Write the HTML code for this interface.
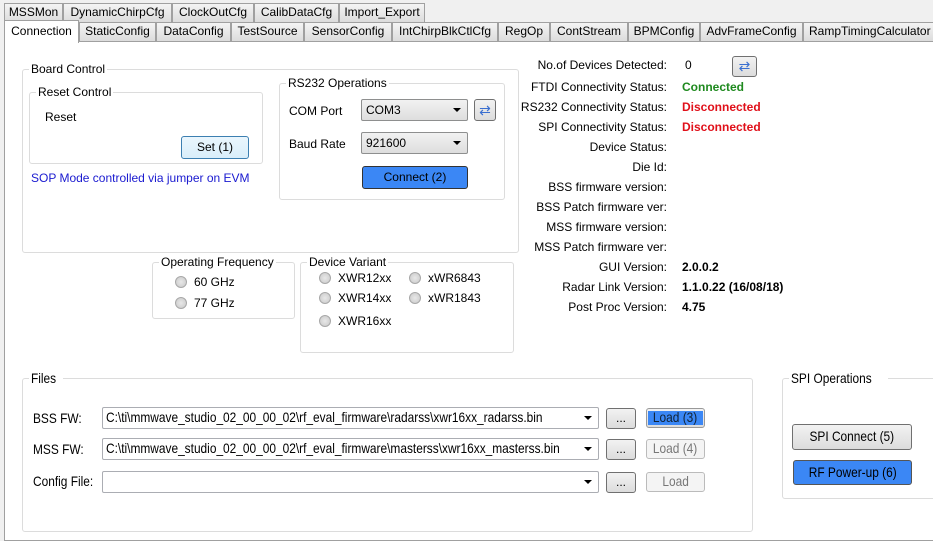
<!DOCTYPE html>
<html><head><meta charset="utf-8"><style>
*{box-sizing:border-box;margin:0;padding:0}
body{width:933px;height:536px;background:#f0f0f0;font-family:"Liberation Sans",sans-serif;font-size:12px;color:#000;position:relative;overflow:hidden}
.a{position:absolute;white-space:nowrap}
.tab{position:absolute;height:19px;border:1px solid #a0a0a0;border-bottom:none;background:linear-gradient(#f4f4f4,#dcdcdc);text-align:center;line-height:17px;font-size:12px;overflow:hidden}
.content{position:absolute;left:4px;top:41px;width:940px;height:500px;background:#fff;border:1px solid #a0a0a0}
.grp{position:absolute;border:1px solid #dcdcdc;border-radius:3px}
.grp>.t{position:absolute;top:-8px;left:6px;background:#fff;padding:0 2px;line-height:14px}
.btn{position:absolute;border:1px solid #707070;border-radius:3px;background:linear-gradient(#f2f2f2,#dcdcdc);text-align:center}
.blue{background:#3b87f5;border-color:#3c7fb1}
.combo{position:absolute;border:1px solid #abadb3;background:#fff;border-radius:2px;overflow:hidden}
.combo.g{background:linear-gradient(#f2f2f2,#dedede);border-color:#8e8f8f}
.arr{position:absolute;right:6px;top:50%;margin-top:-2px;width:0;height:0;border-left:4px solid transparent;border-right:4px solid transparent;border-top:4px solid #000}
.lbl{position:absolute;right:266px;text-align:right;white-space:nowrap}
.val{position:absolute;left:682px;font-weight:bold;white-space:nowrap}
.radio{position:absolute;width:12px;height:12px;border-radius:50%;border:1px solid #a8a8a8;background:radial-gradient(#e8e8e8,#c8c8c8)}
.n{font-size:14px;transform:scaleX(.85);transform-origin:left center;display:inline-block}
.c .n{transform-origin:center}
</style></head><body>
<div class="tab" style="left:4px;top:3px;width:59px">MSSMon</div>
<div class="tab" style="left:63px;top:3px;width:109px">DynamicChirpCfg</div>
<div class="tab" style="left:172px;top:3px;width:82px">ClockOutCfg</div>
<div class="tab" style="left:254px;top:3px;width:85px">CalibDataCfg</div>
<div class="tab" style="left:339px;top:3px;width:86px">Import_Export</div>
<div class="content"></div>
<div class="tab" style="left:79px;top:22px;width:77px">StaticConfig</div>
<div class="tab" style="left:156px;top:22px;width:75px">DataConfig</div>
<div class="tab" style="left:231px;top:22px;width:73px">TestSource</div>
<div class="tab" style="left:304px;top:22px;width:88px">SensorConfig</div>
<div class="tab" style="left:392px;top:22px;width:106px">IntChirpBlkCtlCfg</div>
<div class="tab" style="left:498px;top:22px;width:52px">RegOp</div>
<div class="tab" style="left:550px;top:22px;width:78px">ContStream</div>
<div class="tab" style="left:628px;top:22px;width:72px">BPMConfig</div>
<div class="tab" style="left:700px;top:22px;width:103px">AdvFrameConfig</div>
<div class="tab" style="left:803px;top:22px;width:140px;text-align:left;padding-left:5px">RampTimingCalculator</div>
<div class="tab" style="left:4px;top:20px;width:75px;height:23px;background:#fff;line-height:20px">Connection</div>

<div class="grp" style="left:22px;top:69px;width:497px;height:184px"><span class="t">Board Control</span></div>
<div class="grp" style="left:29px;top:92px;width:234px;height:72px"><span class="t">Reset Control</span></div>
<div class="a" style="left:45px;top:110px">Reset</div>
<div class="btn" style="left:181px;top:136px;width:68px;height:23px;line-height:21px;border-color:#3c7fb1;background:linear-gradient(#eaf6fd,#d9eefa)">Set (1)</div>
<div class="a" style="left:31px;top:171px;color:#1a1ad0">SOP Mode controlled via jumper on EVM</div>
<div class="grp" style="left:279px;top:83px;width:226px;height:117px"><span class="t">RS232 Operations</span></div>
<div class="a" style="left:289px;top:104px">COM Port</div>
<div class="combo g" style="left:361px;top:99px;width:107px;height:22px;padding:3px 4px">COM3<span class="arr"></span></div>
<div class="btn" style="left:474px;top:99px;width:22px;height:22px;color:#3a6fd0;line-height:20px;font-size:14px">⇄</div>
<div class="a" style="left:289px;top:137px">Baud Rate</div>
<div class="combo g" style="left:361px;top:132px;width:107px;height:22px;padding:3px 4px">921600<span class="arr"></span></div>
<div class="btn blue" style="left:362px;top:166px;width:106px;height:23px;line-height:21px;border-color:#333">Connect (2)</div>

<div class="lbl" style="top:58px">No.of Devices Detected:</div><div class="a" style="left:685px;top:58px">0</div>
<div class="btn" style="left:732px;top:56px;width:25px;height:21px;color:#3a6fd0;line-height:19px;font-size:14px">⇄</div>
<div class="lbl" style="top:80px">FTDI Connectivity Status:</div><div class="val" style="top:80px;color:#1f8a1f">Connected</div>
<div class="lbl" style="top:100px">RS232 Connectivity Status:</div><div class="val" style="top:100px;color:#e0101a">Disconnected</div>
<div class="lbl" style="top:120px">SPI Connectivity Status:</div><div class="val" style="top:120px;color:#e0101a">Disconnected</div>
<div class="lbl" style="top:140px">Device Status:</div>
<div class="lbl" style="top:160px">Die Id:</div>
<div class="lbl" style="top:180px">BSS firmware version:</div>
<div class="lbl" style="top:200px">BSS Patch firmware ver:</div>
<div class="lbl" style="top:220px">MSS firmware version:</div>
<div class="lbl" style="top:240px">MSS Patch firmware ver:</div>
<div class="lbl" style="top:260px">GUI Version:</div><div class="val" style="top:260px">2.0.0.2</div>
<div class="lbl" style="top:280px">Radar Link Version:</div><div class="val" style="top:280px">1.1.0.22 (16/08/18)</div>
<div class="lbl" style="top:300px">Post Proc Version:</div><div class="val" style="top:300px">4.75</div>

<div class="grp" style="left:152px;top:262px;width:143px;height:57px"><span class="t">Operating Frequency</span></div>
<div class="radio" style="left:175px;top:276px"></div><div class="a" style="left:194px;top:275px">60 GHz</div>
<div class="radio" style="left:175px;top:297px"></div><div class="a" style="left:194px;top:296px">77 GHz</div>
<div class="grp" style="left:300px;top:262px;width:214px;height:91px"><span class="t">Device Variant</span></div>
<div class="radio" style="left:319px;top:272px"></div><div class="a" style="left:338px;top:271px">XWR12xx</div>
<div class="radio" style="left:409px;top:272px"></div><div class="a" style="left:428px;top:271px">xWR6843</div>
<div class="radio" style="left:319px;top:292px"></div><div class="a" style="left:338px;top:291px">XWR14xx</div>
<div class="radio" style="left:409px;top:292px"></div><div class="a" style="left:428px;top:291px">xWR1843</div>
<div class="radio" style="left:319px;top:315px"></div><div class="a" style="left:338px;top:314px">XWR16xx</div>

<div class="grp" style="left:22px;top:378px;width:731px;height:154px"><span class="t"><span class="n">Files</span></span></div>
<div class="a" style="left:33px;top:410px"><span class="n">BSS FW:</span></div>
<div class="combo" style="left:102px;top:407px;width:497px;height:22px;padding:1px 3px"><span class="n">C:\ti\mmwave_studio_02_00_00_02\rf_eval_firmware\radarss\xwr16xx_radarss.bin</span><span class="arr"></span></div>
<div class="btn" style="left:606px;top:408px;width:30px;height:21px;line-height:18px">...</div>
<div class="btn c" style="left:646px;top:408px;width:59px;height:20px;border-color:#999;line-height:17px"><span style="background:#3b87f5;color:#123;padding:0 1px"><span class="n">Load (3)</span></span></div>
<div class="a" style="left:33px;top:441px"><span class="n">MSS FW:</span></div>
<div class="combo" style="left:102px;top:438px;width:497px;height:22px;padding:1px 3px"><span class="n">C:\ti\mmwave_studio_02_00_00_02\rf_eval_firmware\masterss\xwr16xx_masterss.bin</span><span class="arr"></span></div>
<div class="btn" style="left:606px;top:439px;width:30px;height:21px;line-height:18px">...</div>
<div class="btn c" style="left:646px;top:439px;width:59px;height:20px;border-color:#bbb;color:#777;background:#f4f4f4;line-height:17px"><span class="n">Load (4)</span></div>
<div class="a" style="left:33px;top:473px"><span class="n">Config File:</span></div>
<div class="combo" style="left:102px;top:471px;width:497px;height:22px"><span class="arr"></span></div>
<div class="btn" style="left:606px;top:472px;width:30px;height:21px;line-height:18px">...</div>
<div class="btn c" style="left:646px;top:472px;width:59px;height:20px;border-color:#bbb;color:#777;background:#f4f4f4;line-height:17px"><span class="n">Load</span></div>

<div class="grp" style="left:782px;top:378px;width:160px;height:121px"><span class="t"><span class="n">SPI Operations</span></span></div>
<div class="btn c" style="left:792px;top:424px;width:120px;height:26px;line-height:23px"><span class="n">SPI Connect (5)</span></div>
<div class="btn blue c" style="left:793px;top:460px;width:119px;height:25px;line-height:22px;border-color:#555"><span class="n">RF Power-up (6)</span></div>
</body></html>
